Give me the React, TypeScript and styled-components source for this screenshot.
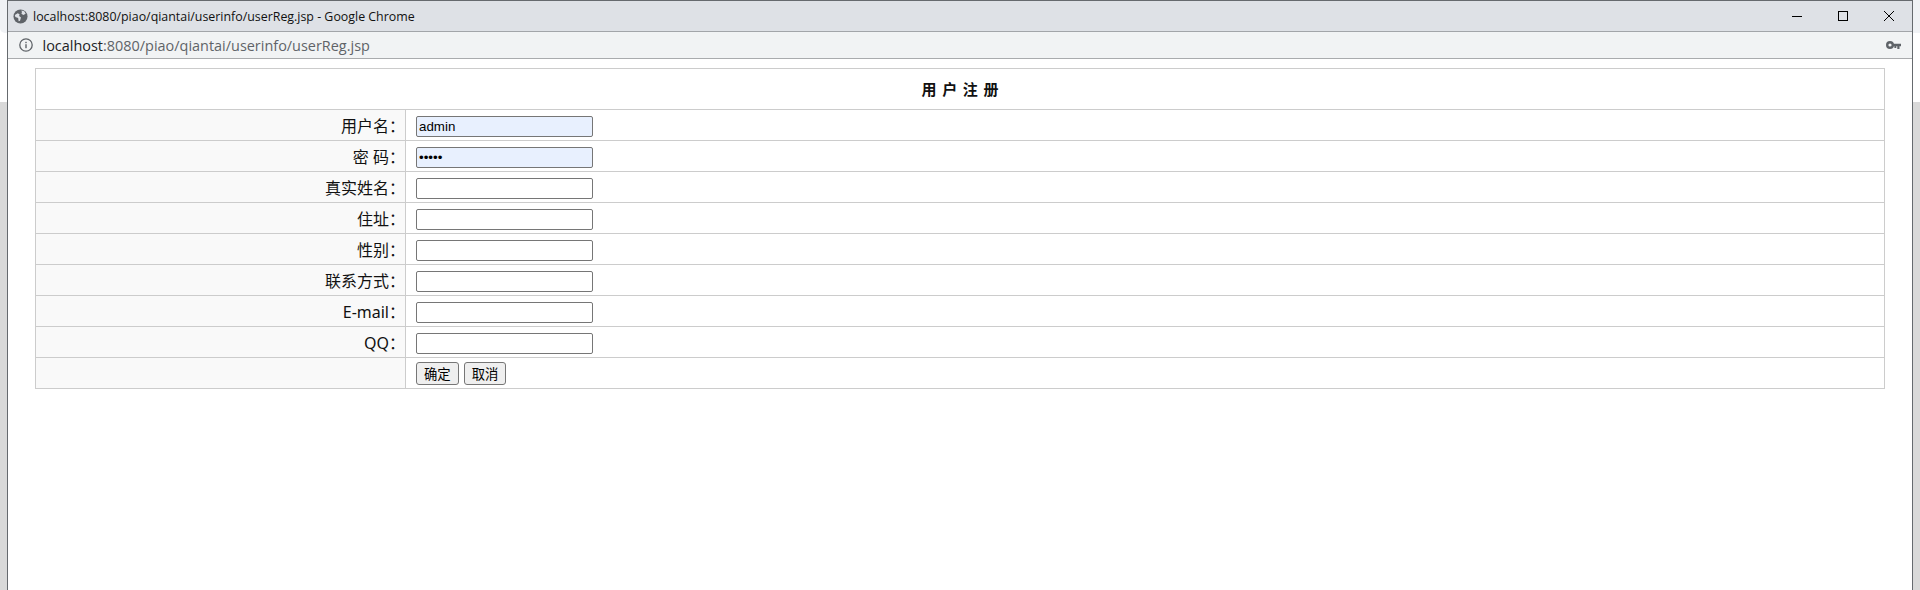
import React from 'react';
import styled, {createGlobalStyle} from 'styled-components';

const GlobalStyle = createGlobalStyle`
  html, body {
    margin: 0;
    height: 590px;
    overflow: hidden;
    background: #fff;
  }
`;

const Desktop = styled('div')`
  display: flex;
  height: 590px;
  width: 1920px;
`;

const Gutter = styled('div')`
  display: flex;
  flex-direction: column;
  flex: 0 0 7px;
`;

const GutterTop = styled('div')<{$side: 'left' | 'right'}>`
  height: 33px;
  background: #f0f2f5;
  border-bottom-left-radius: ${p => (p.$side === 'left' ? '5px' : '0')};
`;

const GutterGap = styled('div')`
  height: 69px;
  background: #fff;
`;

const GutterShade = styled('div')`
  flex: 1;
  background: #d9d9d9;
`;

const Window = styled('div')`
  flex: 1;
  display: flex;
  flex-direction: column;
  min-width: 0;
  border: 1px solid #666a6e;
  border-bottom: none;
  background: #fff;
`;

const TitleBar = styled('div')`
  display: flex;
  align-items: center;
  height: 30px;
  flex: 0 0 30px;
  padding-left: 5px;
  background: #dee1e6;
  border-bottom: 1px solid #a2a5a9;
  box-sizing: content-box;
`;

const TitleText = styled('span')`
  flex: 1;
  margin-left: 5px;
  font-family: 'Open Sans', 'Noto Sans', sans-serif;
  font-size: 12.4px;
  color: #111;
  white-space: nowrap;
`;

const WindowButton = styled('div')`
  display: flex;
  align-items: center;
  justify-content: center;
  width: 46px;
  height: 30px;
`;

const AddressBar = styled('div')`
  display: flex;
  align-items: center;
  flex: 0 0 26px;
  height: 26px;
  padding-left: 11px;
  padding-right: 11px;
  background: #f1f3f4;
  border-bottom: 1px solid #a9abad;
`;

const Url = styled('span')`
  flex: 1;
  margin-left: 9.5px;
  font-family: 'Open Sans', 'Noto Sans', sans-serif;
  font-size: 14.45px;
  color: #5f6368;
  white-space: nowrap;
`;

const UrlHost = styled('span')`
  color: #202124;
`;

const Page = styled('div')`
  flex: 1;
  padding: 9px 27px 0;
  background: #fff;
`;

const FormTable = styled('table')`
  width: 1850px;
  table-layout: fixed;
  border-collapse: collapse;
  font-family: 'Noto Sans', 'Noto Sans CJK SC', sans-serif;
  color: #111;
`;

const HeadCell = styled('th')`
  height: 39px;
  padding: 0 0 1px;
  border: 1px solid #ccc;
  font-family: 'Noto Sans CJK SC', sans-serif;
  font-size: 15px;
  font-weight: 700;
  text-align: center;
  word-spacing: 2.2px;
`;

const LabelCell = styled('td')`
  width: 369px;
  height: 29px;
  padding: 1px 0 0;
  border: 1px solid #ccc;
  background: #f9f9f9;
  font-size: 16px;
  text-align: right;
  line-height: 1;
`;

const FieldCell = styled('td')<{$compact?: boolean}>`
  padding: ${p => (p.$compact ? '1px' : '3px')} 0 0 10px;
  border: 1px solid #ccc;
  background: #fff;
  line-height: 0;
`;

const Field = styled('input')<{$filled?: boolean}>`
  display: block;
  box-sizing: border-box;
  width: 177px;
  height: 21px;
  padding: 1px 2px;
  margin: 0;
  border: 1px solid #767676;
  border-radius: 2px;
  background: ${p => (p.$filled ? '#e8f0fe' : '#fff')};
  font-family: 'Liberation Sans', Arial, sans-serif;
  font-size: 13.33px;
  color: #000;
  outline: none;
`;

const Actions = styled('div')`
  display: flex;
  gap: 5px;
`;

const ActionButton = styled('button')`
  box-sizing: border-box;
  height: 23px;
  padding: 0 7px;
  border: 1px solid #767676;
  border-radius: 3px;
  background: #efefef;
  font-family: 'Noto Sans CJK SC', sans-serif;
  font-size: 13.33px;
  line-height: 1;
  color: #000;
`;

const fields = [
  {label: '用户名：', value: 'admin', filled: true},
  {label: '密 码：', value: 'admin', type: 'password', filled: true},
  {label: '真实姓名：'},
  {label: '住址：'},
  {label: '性别：'},
  {label: '联系方式：'},
  {label: 'E-mail：'},
  {label: 'QQ：'},
] as {label: string; value?: string; type?: string; filled?: boolean}[];

const GlobeIcon = () => (
  <svg width="15" height="15" viewBox="0 0 16 16">
    <circle cx="8" cy="8" r="7.5" fill="#5f6368" />
    <path
      d="M2 6.5 5 4.5 7 5.5 6.5 7.5 8.5 9 7.5 12.5 6 13 5.5 9.5 2.5 8.5Z M9 1.5 12 2.5 13.5 5 11 6.5 9 5 9.5 3.5Z"
      fill="#dee1e6"
    />
  </svg>
);

const InfoIcon = () => (
  <svg width="14" height="14" viewBox="0 0 14 14" fill="none">
    <circle cx="7" cy="7" r="6.2" stroke="#5f6368" strokeWidth="1.3" />
    <rect x="6.3" y="6.2" width="1.4" height="4" fill="#5f6368" />
    <rect x="6.3" y="3.8" width="1.4" height="1.4" fill="#5f6368" />
  </svg>
);

const KeyIcon = () => (
  <svg width="15" height="9" viewBox="0 0 15 9">
    <circle cx="4" cy="4" r="2.8" fill="none" stroke="#5f6368" strokeWidth="2.4" />
    <path d="M6 2.8H15V5.2H13.5V8H11.3V5.2H10.3V7H8.4V5.2H6Z" fill="#5f6368" />
  </svg>
);

const MinimizeIcon = () => (
  <svg width="10" height="10" viewBox="0 0 10 10">
    <path d="M0 5.5H10" stroke="#000" strokeWidth="1" />
  </svg>
);

const MaximizeIcon = () => (
  <svg width="10" height="10" viewBox="0 0 10 10" fill="none">
    <rect x="0.5" y="0.5" width="9" height="9" stroke="#000" strokeWidth="1" />
  </svg>
);

const CloseIcon = () => (
  <svg width="10" height="10" viewBox="0 0 10 10">
    <path d="M0 0L10 10M10 0L0 10" stroke="#000" strokeWidth="1" />
  </svg>
);

export default function App() {
  return (
    <Desktop>
      <GlobalStyle />
      <Gutter>
        <GutterTop $side="left" />
        <GutterGap />
        <GutterShade />
      </Gutter>
      <Window>
        <TitleBar>
          <GlobeIcon />
          <TitleText>localhost:8080/piao/qiantai/userinfo/userReg.jsp - Google Chrome</TitleText>
          <WindowButton>
            <MinimizeIcon />
          </WindowButton>
          <WindowButton>
            <MaximizeIcon />
          </WindowButton>
          <WindowButton>
            <CloseIcon />
          </WindowButton>
        </TitleBar>
        <AddressBar>
          <InfoIcon />
          <Url>
            <UrlHost>localhost</UrlHost>:8080/piao/qiantai/userinfo/userReg.jsp
          </Url>
          <KeyIcon />
        </AddressBar>
        <Page>
          <FormTable>
            <colgroup>
              <col width="370" />
              <col />
            </colgroup>
            <thead>
              <tr>
                <HeadCell colSpan={2}>用 户 注 册</HeadCell>
              </tr>
            </thead>
            <tbody>
              {fields.map(({label, value, type, filled}) => (
                <tr key={label}>
                  <LabelCell>{label}</LabelCell>
                  <FieldCell>
                    <Field type={type || 'text'} defaultValue={value} $filled={filled} />
                  </FieldCell>
                </tr>
              ))}
              <tr>
                <LabelCell />
                <FieldCell $compact>
                  <Actions>
                    <ActionButton type="button">确定</ActionButton>
                    <ActionButton type="button">取消</ActionButton>
                  </Actions>
                </FieldCell>
              </tr>
            </tbody>
          </FormTable>
        </Page>
      </Window>
      <Gutter>
        <GutterTop $side="right" />
        <GutterGap />
        <GutterShade />
      </Gutter>
    </Desktop>
  );
}
